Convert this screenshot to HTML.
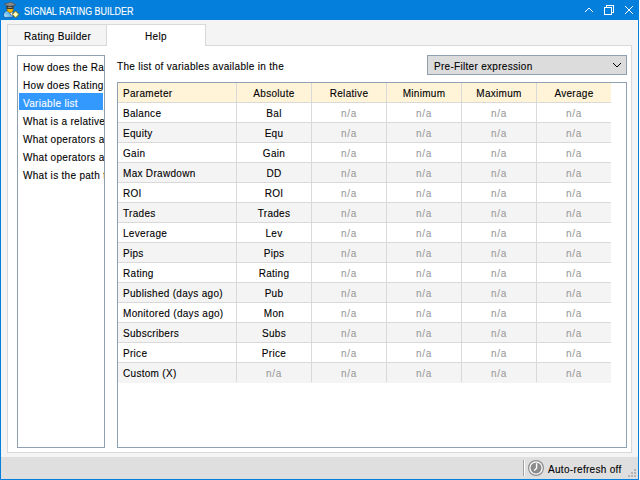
<!DOCTYPE html>
<html><head><meta charset="utf-8">
<style>
*{margin:0;padding:0;box-sizing:border-box}
html,body{width:640px;height:480px;overflow:hidden;background:#fff}
body{position:relative;font-family:"Liberation Sans",sans-serif;font-size:10px;letter-spacing:0.3px;-webkit-text-stroke:0.1px currentColor;color:#000}
.a{position:absolute}
.t{position:absolute;white-space:nowrap;line-height:14px;height:14px}
#title{left:0;top:0;width:639px;height:20px;background:#0480dc}
#wbody{left:1px;top:20px;width:637px;height:459px;background:#f4f4f4}
.bl{background:#0480dc}
.tab{border:1px solid #d9d9d9}
#panel{left:7px;top:45px;width:625px;height:408px;border:1px solid #d9d9d9;background:#fff}
#list{left:17px;top:55px;width:88px;height:393px;border:1px solid #8fa1b0;background:#fff;overflow:hidden}
#list .t{left:5px}
#sel{left:1px;top:37px;width:84px;height:17px;background:#3399ff}
#combo{left:427px;top:55px;width:200px;height:20px;border:1px solid #8fa1b0;background:#dcdcdc}
#grid{left:117px;top:82px;width:510px;height:366px;border:1px solid #8fa1b0;background:#fff}
.row{position:absolute;left:0;width:493px;height:20px;border-bottom:1px solid #d9d9d9}
.c{position:absolute;top:0;height:19px;border-right:1px solid #d9d9d9}
.c0{left:0;width:119px}
.c1{left:119px;width:75px}
.c2{left:194px;width:75px}
.c3{left:269px;width:75px}
.c4{left:344px;width:75px}
.c5{left:419px;width:74px;border-right:none}
.c .t{top:4px;width:100%;text-align:center}
.c0 .t{left:5px;text-align:left}
.na{color:#9c9c9c;-webkit-text-stroke:0.1px #9c9c9c;letter-spacing:0.7px}
.hdr{background:#fff3d8}
.alt{background:#f4f4f4}
#status{left:1px;top:457px;width:637px;height:22px;background:#dfdfdf}
</style></head>
<body>
<div class="a" id="wbody"></div>
<div class="a" id="title"></div>
<div class="a bl" style="left:0;top:20px;width:1px;height:460px"></div>
<div class="a bl" style="left:638px;top:20px;width:1px;height:460px"></div>
<div class="a bl" style="left:0;top:479px;width:639px;height:1px"></div>

<!-- app icon -->
<svg class="a" style="left:0;top:0" width="24" height="20" viewBox="0 0 24 20">
  <defs>
    <linearGradient id="bg1" x1="0" y1="1" x2="1" y2="0"><stop offset="0" stop-color="#c8ecff"/><stop offset="0.5" stop-color="#6cc0f5"/><stop offset="1" stop-color="#2a7ad0"/></linearGradient>
    <radialGradient id="dg1" cx="0.5" cy="0.5" r="0.5"><stop offset="0" stop-color="#ffffe8"/><stop offset="0.6" stop-color="#fff6a0"/><stop offset="1" stop-color="#e8c830"/></radialGradient>
  </defs>
  <path d="M3.6 15.2 C3.6 12.2 5.6 10.4 8 10.2 L12.6 10.6 L13 17.2 L5.6 17.4 C4.4 17.3 3.6 16.4 3.6 15.2Z" fill="url(#bg1)" stroke="#173a78" stroke-width="0.6"/>
  <path d="M9.6 12.4 L12.4 12.2 L12.4 15.6 L11 15.6Z" fill="#fff"/>
  <path d="M9.4 12.2 L11.4 15.8" stroke="#1a3a80" stroke-width="0.7" fill="none"/>
  <path d="M6.8 8.6 L13.4 8.6 L13 11.2 L11 12.6 L9.2 12.4 L7.4 11.2Z" fill="#f2b800" stroke="#6a4a00" stroke-width="0.4"/>
  <rect x="6.4" y="5.6" width="7" height="3.4" rx="0.6" fill="#333"/>
  <path d="M7.6 7.4 Q10 6.4 12.4 7.4 L12.2 8.2 Q10 7.4 7.8 8.2Z" fill="#b0b0b0"/>
  <path d="M4 4.2 L11 2.1 L15.9 4.9 L9.4 6.5Z" fill="#8c8c8c" stroke="#4a4a4a" stroke-width="0.6"/>
  <path d="M15.6 11 L18.9 14.4 L15.6 17.8 L12.3 14.4Z" fill="url(#dg1)" stroke="#8a6a00" stroke-width="0.8"/>
</svg>
<!-- title buttons -->
<svg class="a" style="left:580px;top:0" width="59" height="20" viewBox="580 0 59 20" shape-rendering="crispEdges" fill="#fff">
  <rect x="585" y="11" width="1" height="1"/><rect x="586" y="10" width="1" height="1"/><rect x="587" y="9" width="1" height="1"/><rect x="588" y="8" width="2" height="1"/><rect x="590" y="9" width="1" height="1"/><rect x="591" y="10" width="1" height="1"/><rect x="592" y="11" width="1" height="1"/>
  <path d="M606 5h8v8h-8z M607 6v6h6v-6z" fill-rule="evenodd"/>
  <rect x="604" y="7" width="8" height="8"/>
  <rect x="605" y="8" width="6" height="6" fill="#0480dc"/>
  <rect x="625" y="6" width="1" height="1"/><rect x="626" y="7" width="1" height="1"/><rect x="627" y="8" width="1" height="1"/><rect x="628" y="9" width="2" height="2"/><rect x="630" y="11" width="1" height="1"/><rect x="631" y="12" width="1" height="1"/><rect x="632" y="13" width="1" height="1"/>
  <rect x="632" y="6" width="1" height="1"/><rect x="631" y="7" width="1" height="1"/><rect x="630" y="8" width="1" height="1"/><rect x="627" y="11" width="1" height="1"/><rect x="626" y="12" width="1" height="1"/><rect x="625" y="13" width="1" height="1"/>
</svg>
<!-- title text -->
<div class="t" style="left:24px;top:5px;color:#fff;letter-spacing:0;-webkit-text-stroke:0.1px #fff;transform-origin:0 0;transform:scaleX(0.895)">SIGNAL RATING BUILDER</div>

<!-- tabs -->
<div class="a tab" style="left:7px;top:24px;width:100px;height:22px;background:#f4f4f4"></div>
<div class="a" id="panel"></div>
<div class="a tab" style="left:106px;top:24px;width:100px;height:22px;background:#fff;border-bottom:none"></div>
<div class="t" style="left:24px;top:30px">Rating Builder</div>
<div class="t" style="left:145px;top:30px">Help</div>

<!-- listbox -->
<div class="a" id="list">
  <div class="a" id="sel"></div>
  <div class="t" style="top:5px">How does the Rating Builder work?</div>
  <div class="t" style="top:23px">How does Rating Builder calculate?</div>
  <div class="t" style="top:41px;color:#fff">Variable list</div>
  <div class="t" style="top:59px">What is a relative value?</div>
  <div class="t" style="top:77px">What operators are available?</div>
  <div class="t" style="top:95px">What operators are supported?</div>
  <div class="t" style="top:113px">What is the path to file?</div>
</div>

<div class="t" style="left:117px;top:60px">The list of variables available in the</div>
<div class="a" id="combo"></div>
<div class="t" style="left:434px;top:60px">Pre-Filter expression</div>
<svg class="a" style="left:610px;top:60px" width="14" height="10" viewBox="610 60 14 10" shape-rendering="crispEdges" fill="#000">
  <rect x="613" y="63" width="1" height="1"/><rect x="614" y="64" width="1" height="1"/><rect x="615" y="65" width="1" height="1"/><rect x="616" y="66" width="2" height="1"/><rect x="618" y="65" width="1" height="1"/><rect x="619" y="64" width="1" height="1"/><rect x="620" y="63" width="1" height="1"/>
</svg>


<div class="a" id="grid">
<div class="row hdr" style="top:0"><div class="c c0"><div class="t">Parameter</div></div><div class="c c1"><div class="t">Absolute</div></div><div class="c c2"><div class="t">Relative</div></div><div class="c c3"><div class="t">Minimum</div></div><div class="c c4"><div class="t">Maximum</div></div><div class="c c5"><div class="t">Average</div></div></div>
<div class="row" style="top:20px"><div class="c c0"><div class="t">Balance</div></div><div class="c c1"><div class="t">Bal</div></div><div class="c c2"><div class="t na">n/a</div></div><div class="c c3"><div class="t na">n/a</div></div><div class="c c4"><div class="t na">n/a</div></div><div class="c c5"><div class="t na">n/a</div></div></div>
<div class="row alt" style="top:40px"><div class="c c0"><div class="t">Equity</div></div><div class="c c1"><div class="t">Equ</div></div><div class="c c2"><div class="t na">n/a</div></div><div class="c c3"><div class="t na">n/a</div></div><div class="c c4"><div class="t na">n/a</div></div><div class="c c5"><div class="t na">n/a</div></div></div>
<div class="row" style="top:60px"><div class="c c0"><div class="t">Gain</div></div><div class="c c1"><div class="t">Gain</div></div><div class="c c2"><div class="t na">n/a</div></div><div class="c c3"><div class="t na">n/a</div></div><div class="c c4"><div class="t na">n/a</div></div><div class="c c5"><div class="t na">n/a</div></div></div>
<div class="row alt" style="top:80px"><div class="c c0"><div class="t">Max Drawdown</div></div><div class="c c1"><div class="t">DD</div></div><div class="c c2"><div class="t na">n/a</div></div><div class="c c3"><div class="t na">n/a</div></div><div class="c c4"><div class="t na">n/a</div></div><div class="c c5"><div class="t na">n/a</div></div></div>
<div class="row" style="top:100px"><div class="c c0"><div class="t">ROI</div></div><div class="c c1"><div class="t">ROI</div></div><div class="c c2"><div class="t na">n/a</div></div><div class="c c3"><div class="t na">n/a</div></div><div class="c c4"><div class="t na">n/a</div></div><div class="c c5"><div class="t na">n/a</div></div></div>
<div class="row alt" style="top:120px"><div class="c c0"><div class="t">Trades</div></div><div class="c c1"><div class="t">Trades</div></div><div class="c c2"><div class="t na">n/a</div></div><div class="c c3"><div class="t na">n/a</div></div><div class="c c4"><div class="t na">n/a</div></div><div class="c c5"><div class="t na">n/a</div></div></div>
<div class="row" style="top:140px"><div class="c c0"><div class="t">Leverage</div></div><div class="c c1"><div class="t">Lev</div></div><div class="c c2"><div class="t na">n/a</div></div><div class="c c3"><div class="t na">n/a</div></div><div class="c c4"><div class="t na">n/a</div></div><div class="c c5"><div class="t na">n/a</div></div></div>
<div class="row alt" style="top:160px"><div class="c c0"><div class="t">Pips</div></div><div class="c c1"><div class="t">Pips</div></div><div class="c c2"><div class="t na">n/a</div></div><div class="c c3"><div class="t na">n/a</div></div><div class="c c4"><div class="t na">n/a</div></div><div class="c c5"><div class="t na">n/a</div></div></div>
<div class="row" style="top:180px"><div class="c c0"><div class="t">Rating</div></div><div class="c c1"><div class="t">Rating</div></div><div class="c c2"><div class="t na">n/a</div></div><div class="c c3"><div class="t na">n/a</div></div><div class="c c4"><div class="t na">n/a</div></div><div class="c c5"><div class="t na">n/a</div></div></div>
<div class="row alt" style="top:200px"><div class="c c0"><div class="t">Published (days ago)</div></div><div class="c c1"><div class="t">Pub</div></div><div class="c c2"><div class="t na">n/a</div></div><div class="c c3"><div class="t na">n/a</div></div><div class="c c4"><div class="t na">n/a</div></div><div class="c c5"><div class="t na">n/a</div></div></div>
<div class="row" style="top:220px"><div class="c c0"><div class="t">Monitored (days ago)</div></div><div class="c c1"><div class="t">Mon</div></div><div class="c c2"><div class="t na">n/a</div></div><div class="c c3"><div class="t na">n/a</div></div><div class="c c4"><div class="t na">n/a</div></div><div class="c c5"><div class="t na">n/a</div></div></div>
<div class="row alt" style="top:240px"><div class="c c0"><div class="t">Subscribers</div></div><div class="c c1"><div class="t">Subs</div></div><div class="c c2"><div class="t na">n/a</div></div><div class="c c3"><div class="t na">n/a</div></div><div class="c c4"><div class="t na">n/a</div></div><div class="c c5"><div class="t na">n/a</div></div></div>
<div class="row" style="top:260px"><div class="c c0"><div class="t">Price</div></div><div class="c c1"><div class="t">Price</div></div><div class="c c2"><div class="t na">n/a</div></div><div class="c c3"><div class="t na">n/a</div></div><div class="c c4"><div class="t na">n/a</div></div><div class="c c5"><div class="t na">n/a</div></div></div>
<div class="row alt" style="top:280px;border-bottom:none"><div class="c c0"><div class="t">Custom (X)</div></div><div class="c c1"><div class="t na">n/a</div></div><div class="c c2"><div class="t na">n/a</div></div><div class="c c3"><div class="t na">n/a</div></div><div class="c c4"><div class="t na">n/a</div></div><div class="c c5"><div class="t na">n/a</div></div></div>
</div>

<div class="a" id="status"></div>
<div class="t" style="left:548px;top:463px">Auto-refresh off</div>
<div class="a" style="left:523px;top:460px;width:1px;height:16px;background:#a0a0a0"></div>
<div class="a" style="left:524px;top:460px;width:1px;height:16px;background:#fff"></div>
<svg class="a" style="left:526px;top:458px" width="20" height="20" viewBox="0 0 20 20">
  <circle cx="10" cy="10" r="7.4" fill="#fff" stroke="#8c8c8c" stroke-width="1.2"/>
  <circle cx="10" cy="10" r="5.5" fill="#8c8c8c"/>
  <path d="M10.6 5.2 V10.2 L8.2 12.4" fill="none" stroke="#fff" stroke-width="1.4"/>
</svg>
<svg class="a" style="left:626px;top:467px" width="12" height="12" viewBox="626 467 12 12" shape-rendering="crispEdges" fill="#b4b4b4">
  <rect x="634" y="469" width="2" height="2"/><rect x="631" y="472" width="2" height="2"/><rect x="634" y="472" width="2" height="2"/><rect x="628" y="475" width="2" height="2"/><rect x="631" y="475" width="2" height="2"/><rect x="634" y="475" width="2" height="2"/>
</svg>

</body></html>
